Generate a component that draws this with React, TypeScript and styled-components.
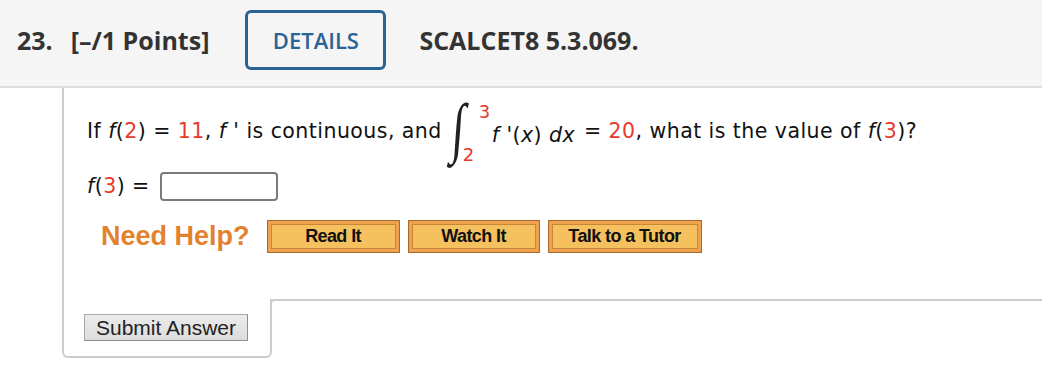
import React from "react";
import styled, { createGlobalStyle } from "styled-components";

const Global = createGlobalStyle`
  html, body { margin: 0; padding: 0; background: #ffffff; }
  body { width: 1042px; height: 382px; overflow: hidden; }
`;

const Page = styled.div`
  width: 1042px;
  height: 382px;
  background: #fff;
`;

const Header = styled.header`
  box-sizing: border-box;
  height: 88px;
  background: #f5f5f5;
  border-bottom: 2px solid #dddddd;
  display: flex;
  align-items: flex-start;
  padding: 10px 0 0 17px;
  font-family: "Open Sans", "Liberation Sans", sans-serif;
  font-weight: 700;
  font-size: 25px;
  color: #333333;
`;

const HeadText = styled.span<{ $gap: number }>`
  line-height: 60px;
  margin-right: ${(p) => p.$gap}px;
`;

const DetailsBtn = styled.div`
  box-sizing: border-box;
  width: 141px;
  height: 60px;
  border: 3px solid #2b6395;
  border-radius: 6px;
  display: flex;
  align-items: center;
  justify-content: center;
  color: #2b6395;
  font-weight: 600;
  font-size: 22px;
  margin-right: 33px;
`;

const Body = styled.div`
  margin-left: 62px;
`;

const Question = styled.div`
  border-left: 2px solid #cccccc;
  padding: 10px 0 0 23px;
  height: 211px;
  box-sizing: border-box;
  font-family: "DejaVu Sans", Verdana, sans-serif;
  font-size: 20.5px;
  color: #111111;
`;

const Line = styled.div`
  white-space: pre;
  height: 66px;
  line-height: 66px;
  letter-spacing: 0.45px;
`;

const Red = styled.span`
  color: #e8392b;
`;

const I = styled.i``;

const Integral = styled.span`
  position: relative;
  display: inline-block;
  vertical-align: top;
  width: 40px;
  height: 66px;
  margin: 0 2px 0 8px;
`;

const IntSign = styled.span`
  position: absolute;
  left: 2px;
  top: -3px;
  font-family: "Liberation Serif", serif;
  font-size: 46px;
  line-height: 66px;
  transform: scaleY(1.45) skewX(-6deg);
  transform-origin: center;
  color: #222;
`;

const Limit = styled.span<{ $x: number; $y: number }>`
  position: absolute;
  left: ${(p) => p.$x}px;
  top: ${(p) => p.$y}px;
  font-size: 18px;
  line-height: 18px;
  color: #e8392b;
`;

const Integrand = styled.span`
  position: relative;
  top: 4px;
  margin-right: 2px;
`;

const AnswerLine = styled.div`
  display: flex;
  align-items: center;
  white-space: pre;
  height: 30px;
  margin-top: 7px;
  letter-spacing: 0.45px;
`;

const AnswerBox = styled.div`
  box-sizing: border-box;
  width: 118px;
  height: 29px;
  border: 2px solid #7a7a7a;
  border-radius: 4px;
  margin-left: 10px;
  background: #fff;
`;

const HelpRow = styled.div`
  display: flex;
  align-items: center;
  margin-top: 19px;
  margin-left: 14px;
  gap: 8px;
`;

const NeedHelp = styled.span`
  font-family: "Liberation Sans", Arial, sans-serif;
  font-weight: 700;
  font-size: 27px;
  color: #e2822f;
  margin-right: 9px;
`;

const HelpBtn = styled.div<{ $w: number }>`
  box-sizing: border-box;
  width: ${(p) => p.$w}px;
  height: 33px;
  border: 1px solid #a7692c;
  background: #eea24f;
  padding: 3px;
  display: flex;
`;

const HelpInner = styled.div`
  flex: 1;
  border: 1px solid #c98637;
  background: #f5c15f;
  display: flex;
  align-items: center;
  justify-content: center;
  font-family: "Liberation Sans", Arial, sans-serif;
  font-weight: 700;
  font-size: 18px;
  letter-spacing: -0.6px;
  color: #111;
`;

const Footer = styled.div`
  display: flex;
`;

const SubmitTab = styled.div`
  box-sizing: border-box;
  width: 210px;
  height: 59px;
  border: 2px solid #cccccc;
  border-top: none;
  border-radius: 0 0 6px 6px;
  padding: 15px 0 0 20px;
`;

const Filler = styled.div`
  flex: 1;
  border-top: 2px solid #cccccc;
  border-top-left-radius: 4px;
  margin-left: -2px;
  height: 10px;
  border-left: 2px solid #cccccc;
  box-sizing: border-box;
`;

const SubmitBtn = styled.div`
  box-sizing: border-box;
  width: 164px;
  height: 27px;
  border: 1px solid #a9a9a9;
  border-right-color: #8f8f8f;
  border-bottom-color: #8f8f8f;
  background: linear-gradient(#ececec, #dcdcdc);
  display: flex;
  align-items: center;
  justify-content: center;
  font-family: "Liberation Sans", Arial, sans-serif;
  font-size: 21px;
  color: #222;
`;

export default function App() {
  return (
    <Page>
      <Global />
      <Header>
        <HeadText $gap={18}>23.</HeadText>
        <HeadText $gap={36}>[–/1 Points]</HeadText>
        <DetailsBtn>DETAILS</DetailsBtn>
        <HeadText $gap={0}>SCALCET8 5.3.069.</HeadText>
      </Header>
      <Body>
        <Question>
          <Line>
            If <I>f</I>(<Red>2</Red>) = <Red>11</Red>, <I>f</I> ' is continuous, and
            <Integral>
              <IntSign>∫</IntSign>
              <Limit $x={29} $y={5}>3</Limit>
              <Limit $x={13} $y={48}>2</Limit>
            </Integral>
            <Integrand>
              <I>f</I> '(<I>x</I>) <I>dx</I>
            </Integrand>
            {" = "}
            <Red>20</Red>, what is the value of <I>f</I>(<Red>3</Red>)?
          </Line>
          <AnswerLine>
            <I>f</I>(<Red>3</Red>) =
            <AnswerBox />
          </AnswerLine>
          <HelpRow>
            <NeedHelp>Need Help?</NeedHelp>
            <HelpBtn $w={133}>
              <HelpInner>Read It</HelpInner>
            </HelpBtn>
            <HelpBtn $w={132}>
              <HelpInner>Watch It</HelpInner>
            </HelpBtn>
            <HelpBtn $w={154}>
              <HelpInner>Talk to a Tutor</HelpInner>
            </HelpBtn>
          </HelpRow>
        </Question>
        <Footer>
          <SubmitTab>
            <SubmitBtn>Submit Answer</SubmitBtn>
          </SubmitTab>
          <Filler />
        </Footer>
      </Body>
    </Page>
  );
}
